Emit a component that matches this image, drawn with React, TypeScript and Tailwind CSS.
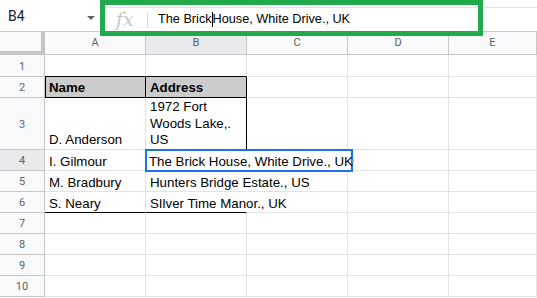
import { ReactNode } from 'react';

const COLS = ['A', 'B', 'C', 'D', 'E'];
const ROWS = [1, 2, 3, 4, 5, 6, 7, 8, 9, 10];

type CellDef = {
  text?: ReactNode;
  cls?: string;
  tall?: boolean;
  head?: boolean;
};

// sheet content, keyed by "col+row"
const cells: Record<string, CellDef> = {
  A1: { cls: 'border-b-black' },
  B1: { cls: 'border-b-black' },
  A2: { text: 'Name', cls: 'bg-[#cccccc] font-bold border-r-black border-b-black', head: true },
  B2: { text: 'Address', cls: 'bg-[#cccccc] font-bold border-r-black border-b-black', head: true },
  A3: { text: 'D. Anderson', tall: true },
  B3: {
    text: (
      <>
        1972 Fort<br />Woods Lake,.<br />US
      </>
    ),
    cls: 'border-r-black',
    tall: true,
  },
  A4: { text: 'I. Gilmour' },
  A5: { text: 'M. Bradbury' },
  B5: { text: 'Hunters Bridge Estate., US', cls: 'border-r-transparent' },
  A6: { text: 'S. Neary', cls: 'border-b-black' },
  B6: { text: 'SIlver Time Manor., UK', cls: 'border-r-transparent border-b-black' },
};

function Cell({ id }: { id: string }) {
  const def = cells[id] || {};

  if (id === 'B4') {
    return (
      <div className="relative min-h-0 border-r border-b border-[#e2e3e3]">
        <div className="absolute left-[-1px] top-[-1px] z-10 flex h-[23px] w-[208px] items-end border-2 border-[#1a73e8] bg-white pl-[2px] leading-[16px] whitespace-nowrap">
          The Brick House, White Drive., UK
        </div>
        <span className="absolute left-[206px] top-[9px] z-10 h-[3px] w-[2px] bg-gray-400" />
      </div>
    );
  }

  const spacing = def.tall ? 'pb-0 leading-[16.7px]' : def.head ? 'pb-[1px] leading-[16px]' : 'pb-0 leading-[16px]';

  return (
    <div
      className={`flex min-h-0 items-end whitespace-nowrap border-r border-b border-[#e2e3e3] pl-[4px] ${spacing} ${def.cls || ''} ${
        id === 'A2' ? 'shadow-[inset_1px_0_0_#000]' : ''
      }`}
    >
      {def.text}
    </div>
  );
}

export default function App() {
  return (
    <div className="relative h-[298px] w-[537px] overflow-hidden bg-white font-['Liberation_Sans',Arial,sans-serif] text-[13.3px] text-black">
      {/* formula bar */}
      <div className="flex h-[32px] border-b border-[#c7c7c7]">
        <div className="flex w-[100px] items-center justify-between pl-[8px] pr-[5px] pt-[2px] font-['Roboto',sans-serif] text-[14px] text-[#202124]">
          <span>B4</span>
          <span className="mt-[3px] h-0 w-0 border-x-[4px] border-t-[4px] border-x-transparent border-t-[#5f6368]" />
        </div>
        <div className="mt-[7px] flex flex-1 items-center border-t border-[#e2e3e3] text-[12.7px]">
          <span className="ml-[16px] w-[20px] font-['DejaVu_Serif',serif] text-[19px] italic text-[#c4c7c5]">fx</span>
          <span className="ml-[11px] h-[14px] w-[1px] bg-[#d3d4d5]" />
          <span className="ml-[10px]">The Brick</span>
          <span className="h-[15px] w-[1px] bg-black" />
          <span>House, White Drive., UK</span>
        </div>
      </div>

      {/* grid */}
      <div className="grid grid-cols-[45px_101px_101px_101px_101px_1fr] grid-rows-[23px_22px_21px_52px_21px_21px_21px_21px_21px_21px_21px]">
        <div className="border-r-4 border-b-4 border-[#c4c4c4] bg-[#f8f9fa]" />
        {COLS.map((c) => (
          <div
            key={c}
            className={`flex items-center justify-center border-r border-b border-[#c7c7c7] font-['Roboto',sans-serif] text-[11px] leading-[14px] text-[#5f6368] ${
              c === 'B' ? 'bg-[#e8eaed] text-[#3c4043]' : 'bg-[#f8f9fa]'
            }`}
          >
            {c}
          </div>
        ))}

        {ROWS.map((row) => (
          <div key={row} className="contents">
            <div
              className={`flex items-center justify-center border-r border-b border-[#c7c7c7] pt-[2px] font-['Roboto',sans-serif] text-[11px] leading-[14px] text-[#5f6368] ${
                row === 4 ? 'bg-[#e8eaed] text-[#3c4043]' : 'bg-[#f8f9fa]'
              }`}
            >
              {row}
            </div>
            {COLS.map((c) => (
              <Cell key={c + row} id={c + row} />
            ))}
          </div>
        ))}
      </div>

      {/* highlight around the formula bar */}
      <div className="absolute left-[100px] top-0 h-[36px] w-[383px] border-[5px] border-[#22a94b]" />
    </div>
  );
}
